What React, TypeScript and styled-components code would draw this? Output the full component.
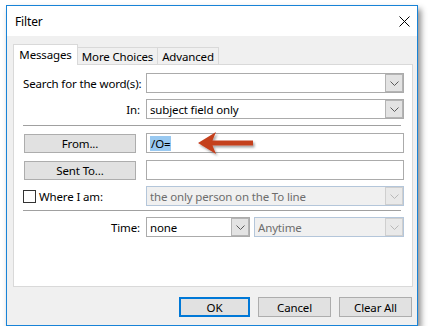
import React from "react";
import styled, { createGlobalStyle } from "styled-components";

const GlobalStyle = createGlobalStyle`
  body {
    margin: 0;
    background: #ffffff;
    font-family: "Noto Sans", "DejaVu Sans", sans-serif;
    font-size: 11.5px;
    letter-spacing: -0.15px;
    color: #000000;
  }
`;

const Page = styled.div`
  padding: 5px 0 0 6px;
`;

const Window = styled.div`
  width: 412px;
  height: 321px;
  box-sizing: border-box;
  border: 1px solid #1883d7;
  background: #f0f0f0;
  box-shadow: 3px 4px 6px rgba(0, 0, 0, 0.45);
  display: flex;
  flex-direction: column;
`;

const TitleBar = styled.div`
  height: 30px;
  flex: none;
  background: #ffffff;
  display: flex;
  align-items: center;
  justify-content: space-between;
  padding: 0 7px 0 8px;
  font-size: 12px;
`;

const Body = styled.div`
  flex: 1;
  display: flex;
  flex-direction: column;
  padding: 8px 5px 0 6px;
`;

const TabStrip = styled.div`
  display: flex;
  align-items: flex-end;
  height: 20px;
`;

const Tab = styled.div<{ $active?: boolean; $width: number }>`
  box-sizing: border-box;
  width: ${(p) => p.$width}px;
  height: ${(p) => (p.$active ? 21 : 17)}px;
  margin-bottom: ${(p) => (p.$active ? -1 : 0)}px;
  margin-left: ${(p) => (p.$active ? 0 : -1)}px;
  position: relative;
  z-index: ${(p) => (p.$active ? 2 : 1)};
  background: ${(p) => (p.$active ? "#ffffff" : "#f0f0f0")};
  border: 1px solid #d9d9d9;
  border-bottom: none;
  display: flex;
  align-items: ${(p) => (p.$active ? "flex-start" : "center")};
  padding-top: ${(p) => (p.$active ? 2 : 0)}px;
  justify-content: center;
  white-space: nowrap;
  &:first-child {
    margin-left: 0;
  }
`;

const Panel = styled.div`
  width: 400px;
  height: 223px;
  box-sizing: border-box;
  background: #ffffff;
  border: 1px solid #d9d9d9;
  padding: 8px 8px 0 9px;
  display: flex;
  flex-direction: column;
`;

const Row = styled.div<{ $gap?: number }>`
  display: grid;
  grid-template-columns: 117px 1fr;
  column-gap: 6px;
  align-items: center;
  height: 20px;
  margin-top: ${(p) => p.$gap ?? 0}px;
`;

const Label = styled.div`
  text-align: right;
  white-space: nowrap;
`;

const Separator = styled.div<{ $top: number; $bottom: number }>`
  height: 1px;
  background: #a0a0a0;
  margin: ${(p) => p.$top}px 3px ${(p) => p.$bottom}px 0;
`;

const Field = styled.div<{ $disabled?: boolean }>`
  position: relative;
  box-sizing: border-box;
  height: 20px;
  display: flex;
  align-items: center;
  padding-left: 3px;
  border: 1px solid ${(p) => (p.$disabled ? "#b4c6da" : "#ababab")};
  background: ${(p) => (p.$disabled ? "#f0f0f0" : "#ffffff")};
  color: ${(p) => (p.$disabled ? "#6d6d6d" : "#000000")};
  white-space: nowrap;
`;

const FieldText = styled.span`
  flex: 1;
  overflow: hidden;
`;

const DropButton = styled.div<{ $disabled?: boolean }>`
  box-sizing: border-box;
  width: 18px;
  height: 18px;
  flex: none;
  background: ${(p) => (p.$disabled ? "#e9e9e9" : "#e3e3e3")};
  border: 1px solid ${(p) => (p.$disabled ? "#cfcfcf" : "#b4b4b4")};
  display: flex;
  align-items: center;
  justify-content: center;
`;

const Selected = styled.span`
  background: #99c9f1;
  padding: 1px 1px;
`;

const PushButton = styled.div<{ $width: number; $default?: boolean }>`
  box-sizing: border-box;
  width: ${(p) => p.$width}px;
  height: 20px;
  background: #e1e1e1;
  border: ${(p) => (p.$default ? "2px solid #0078d7" : "1px solid #adadad")};
  display: flex;
  align-items: center;
  justify-content: center;
  white-space: nowrap;
`;

const SideButton = styled(PushButton)`
  height: 19px;
  margin-left: 1px;
`;

const CheckLabel = styled.label`
  display: flex;
  align-items: center;
  gap: 3px;
  white-space: nowrap;
`;

const CheckBox = styled.span`
  box-sizing: border-box;
  width: 13px;
  height: 13px;
  border: 1px solid #333333;
  background: #ffffff;
`;

const TimeFields = styled.div`
  display: grid;
  grid-template-columns: 104px 1fr;
  column-gap: 4px;
`;

const ArrowMark = styled.svg`
  position: absolute;
  left: 50px;
  top: -4px;
  overflow: visible;
`;

const Footer = styled.div`
  display: flex;
  justify-content: flex-end;
  gap: 8px;
  margin-top: 10px;
`;

const Chevron = ({ disabled }: { disabled?: boolean }) => (
  <svg width="9" height="5" viewBox="0 0 9 5">
    <path
      d="M0.5 0.5 L4.5 4.5 L8.5 0.5"
      fill="none"
      stroke={disabled ? "#b8b8b8" : "#5a5a5a"}
      strokeWidth="1"
    />
  </svg>
);

const Select = ({
  value,
  disabled,
  children,
}: {
  value?: string;
  disabled?: boolean;
  children?: React.ReactNode;
}) => (
  <Field $disabled={disabled}>
    <FieldText>{children ?? value}</FieldText>
    <DropButton $disabled={disabled}>
      <Chevron disabled={disabled} />
    </DropButton>
  </Field>
);

export default function App() {
  return (
    <>
      <GlobalStyle />
      <Page>
        <Window>
          <TitleBar>
            <span>Filter</span>
            <svg width="11" height="11" viewBox="0 0 11 11">
              <path d="M0.5 0.5 L10.5 10.5 M10.5 0.5 L0.5 10.5" stroke="#000" strokeWidth="1" />
            </svg>
          </TitleBar>
          <Body>
            <TabStrip>
              <Tab $active $width={65}>Messages</Tab>
              <Tab $width={81}>More Choices</Tab>
              <Tab $width={62}>Advanced</Tab>
            </TabStrip>
            <Panel>
              <Row>
                <Label>Search for the word(s):</Label>
                <Select value="" />
              </Row>
              <Row $gap={6}>
                <Label>In:</Label>
                <Select value="subject field only" />
              </Row>
              <Separator $top={6} $bottom={7} />
              <Row>
                <SideButton $width={112}>From...</SideButton>
                <Field>
                  <FieldText>
                    <Selected>/O=</Selected>
                  </FieldText>
                  <ArrowMark width="60" height="26" viewBox="0 0 60 26">
                    <defs>
                      <filter id="shadow" x="-20%" y="-40%" width="150%" height="200%">
                        <feDropShadow dx="1.5" dy="2" stdDeviation="1.2" floodColor="#000" floodOpacity="0.35" />
                      </filter>
                    </defs>
                    <path
                      d="M1 13 L19 2 L15.5 10.5 L56 10.5 L56 15.5 L15.5 15.5 L19 24 Z"
                      fill="#c4401e"
                      filter="url(#shadow)"
                    />
                  </ArrowMark>
                </Field>
              </Row>
              <Row $gap={7}>
                <SideButton $width={112}>Sent To...</SideButton>
                <Field />
              </Row>
              <Row $gap={6}>
                <CheckLabel>
                  <CheckBox />
                  Where I am:
                </CheckLabel>
                <Select disabled value="the only person on the To line" />
              </Row>
              <Separator $top={4} $bottom={6} />
              <Row>
                <Label>Time:</Label>
                <TimeFields>
                  <Select value="none" />
                  <Select disabled value="Anytime" />
                </TimeFields>
              </Row>
            </Panel>
            <Footer>
              <PushButton $width={71} $default>OK</PushButton>
              <PushButton $width={73}>Cancel</PushButton>
              <PushButton $width={73}>Clear All</PushButton>
            </Footer>
          </Body>
        </Window>
      </Page>
    </>
  );
}
